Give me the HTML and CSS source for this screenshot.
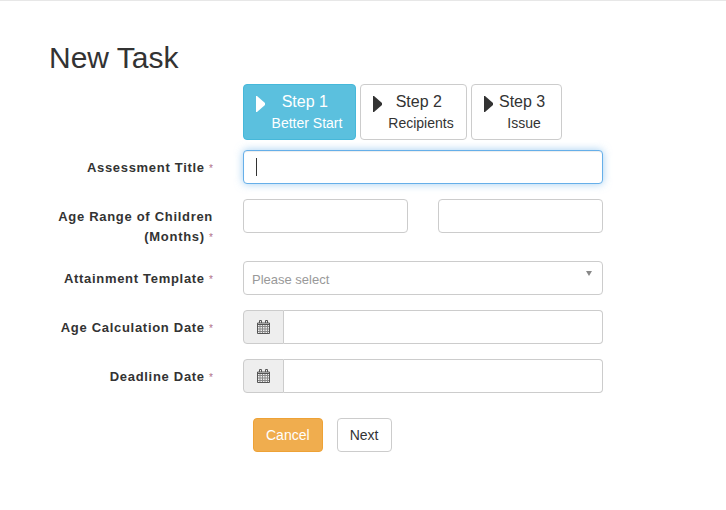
FILE: index.html
```html
<!DOCTYPE html>
<html lang="en">
<head>
    <meta charset="UTF-8">
    <meta name="viewport" content="width=device-width, initial-scale=1.0">
    <title>New Task</title>
    <link rel="stylesheet" href="styles.css">
</head>
<body>
    <div class="container">
        <h1>New Task</h1>
        <div class="steps">
            <div class="step active">
                <svg class="step-arrow" viewBox="0 0 9 16"><polygon points="0,0 1,0 9,7 9,9 1,16 0,16"/></svg>
                <div class="step-text step-text-1">
                    <div class="step-name">Step 1&nbsp;</div>
                    <div class="step-sub">Better Start</div>
                </div>
            </div>
            <div class="step">
                <svg class="step-arrow" viewBox="0 0 9 16"><polygon points="0,0 1,0 9,7 9,9 1,16 0,16"/></svg>
                <div class="step-text step-text-2">
                    <div class="step-name">Step 2&nbsp;</div>
                    <div class="step-sub">Recipients</div>
                </div>
            </div>
            <div class="step">
                <svg class="step-arrow" viewBox="0 0 9 16"><polygon points="0,0 1,0 9,7 9,9 1,16 0,16"/></svg>
                <div class="step-text step-text-3">
                    <div class="step-name">Step 3&nbsp;</div>
                    <div class="step-sub">Issue</div>
                </div>
            </div>
        </div>
        <form>
            <div class="form-row">
                <label>Assessment Title <span class="req">*</span></label>
                <div class="field">
                    <div class="input focused"><span class="caret"></span></div>
                </div>
            </div>
            <div class="form-row">
                <label>Age Range of Children (Months) <span class="req">*</span></label>
                <div class="field range">
                    <div class="input"></div>
                    <div class="input"></div>
                </div>
            </div>
            <div class="form-row">
                <label>Attainment Template <span class="req">*</span></label>
                <div class="field">
                    <div class="input select">
                        <span class="placeholder">Please select</span>
                        <span class="select-arrow"></span>
                    </div>
                </div>
            </div>
            <div class="form-row">
                <label>Age Calculation Date <span class="req">*</span></label>
                <div class="field date">
                    <div class="addon">
                        <svg class="cal" viewBox="0 0 13 14"><path class="cal-grid" d="M0.5 6.5h12M0.5 9h12M0.5 11.5h12M3 5v8.5M5.5 5v8.5M8 5v8.5M10.5 5v8.5"/><path d="M0.5 3h12v10.5h-12zM0.5 4.5h12M2.5 3v-2.5h2v2.5M8.5 3v-2.5h2v2.5"/></svg>
                    </div>
                    <div class="input"></div>
                </div>
            </div>
            <div class="form-row">
                <label>Deadline Date <span class="req">*</span></label>
                <div class="field date">
                    <div class="addon">
                        <svg class="cal" viewBox="0 0 13 14"><path class="cal-grid" d="M0.5 6.5h12M0.5 9h12M0.5 11.5h12M3 5v8.5M5.5 5v8.5M8 5v8.5M10.5 5v8.5"/><path d="M0.5 3h12v10.5h-12zM0.5 4.5h12M2.5 3v-2.5h2v2.5M8.5 3v-2.5h2v2.5"/></svg>
                    </div>
                    <div class="input"></div>
                </div>
            </div>
            <div class="actions">
                <button type="button" class="btn btn-cancel">Cancel</button>
                <button type="button" class="btn btn-next">Next</button>
            </div>
        </form>
    </div>
</body>
</html>
```

FILE: styles.css
```css
body {
    font-family: 'Liberation Sans', Arial, sans-serif;
    font-size: 14px;
    color: #333;
    background-color: #fff;
    margin: 0;
    border-top: 1px solid #e7e7e7;
}
.container {
    padding: 40px 0 0 48px;
}
h1 {
    font-size: 30px;
    font-weight: 400;
    line-height: 33px;
    margin: 0 0 10px 1px;
}
.steps {
    display: flex;
    gap: 4px;
    margin-left: 195px;
    margin-bottom: 10px;
}
.step {
    display: flex;
    background-color: #fff;
    border: 1px solid #ccc;
    border-radius: 4px;
    padding: 6px 12px;
    height: 42px;
}
.step.active {
    background-color: #5bc0de;
    border-color: #46b8da;
    color: #fff;
}
.step-arrow {
    width: 9px;
    height: 16px;
    margin: 5px 6px 0 0;
    fill: #333;
}
.step.active .step-arrow {
    fill: #fff;
}
.step-text {
    text-align: center;
    white-space: nowrap;
}
.step-text-1 {
    width: 72px;
}
.step-text-2 {
    width: 66px;
}
.step-text-3 {
    width: 50px;
}
.step-name {
    font-size: 16px;
    line-height: 22px;
}
.step-sub {
    line-height: 20px;
}
.form-row {
    display: grid;
    grid-template-columns: 195px 360px;
    margin-bottom: 15px;
}
label {
    font-size: 13px;
    font-weight: 700;
    line-height: 20px;
    letter-spacing: 0.7px;
    text-align: right;
    padding: 8px 30px 0 5px;
    margin-bottom: -1px;
}
.req {
    color: #b0708a;
    font-size: 10px;
    font-weight: 400;
    line-height: 1;
    letter-spacing: 0;
}
.input {
    box-sizing: border-box;
    flex: 1;
    height: 34px;
    background-color: #fff;
    border: 1px solid #ccc;
    border-radius: 4px;
    position: relative;
}
.input.focused {
    border-color: #66afe9;
    box-shadow: inset 0 1px 1px rgba(0, 0, 0, 0.075), 0 0 8px rgba(102, 175, 233, 0.6);
}
.caret {
    position: absolute;
    left: 12px;
    top: 7px;
    width: 1px;
    height: 18px;
    background-color: #333;
}
.range {
    display: flex;
    gap: 30px;
}
.select {
    font-size: 13px;
    padding-left: 8px;
    line-height: 36px;
}
.placeholder {
    color: #999;
}
.select-arrow {
    position: absolute;
    right: 10px;
    top: 9px;
    border-top: 5px solid #888;
    border-left: 3.5px solid transparent;
    border-right: 3.5px solid transparent;
}
.date {
    display: flex;
}
.addon {
    box-sizing: border-box;
    width: 41px;
    height: 34px;
    background-color: #eee;
    border: 1px solid #ccc;
    border-radius: 4px 0 0 4px;
    display: flex;
    align-items: center;
    justify-content: center;
}
.date .input {
    border-left: 0;
    border-radius: 0 4px 4px 0;
}
.cal {
    width: 13px;
    height: 14px;
    margin-left: -1px;
    fill: none;
    stroke: #555;
    stroke-width: 1;
}
.cal-grid {
    stroke: #888;
}
.actions {
    display: flex;
    gap: 14px;
    margin: 25px 0 0 205px;
}
.btn {
    font-family: inherit;
    font-size: 14px;
    line-height: 20px;
    color: #333;
    background-color: #fff;
    border: 1px solid #ccc;
    border-radius: 4px;
    padding: 6px 12px;
    cursor: pointer;
}
.btn-cancel {
    color: #fff;
    background-color: #f0ad4e;
    border-color: #eea236;
}
.btn-next {
    width: 55px;
}
```
